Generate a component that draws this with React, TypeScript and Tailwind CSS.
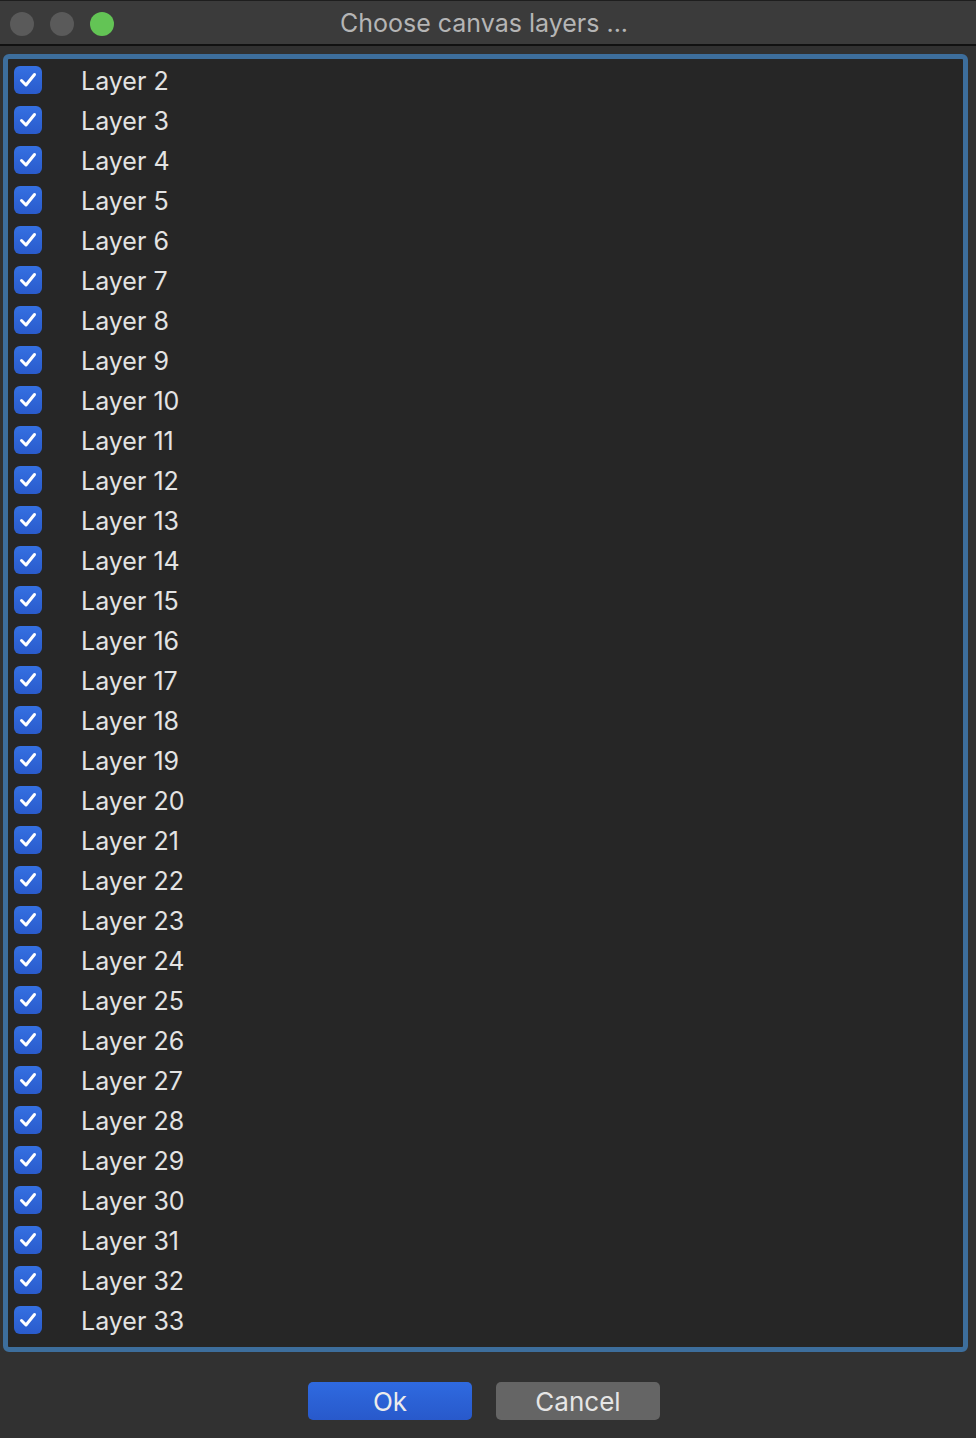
import React from 'react'

const LAYERS = Array.from({ length: 32 }, (_, i) => `Layer ${i + 2}`)

function CheckIcon() {
  return (
    <svg width="20" height="20" viewBox="0 0 20 20" fill="none" stroke="white" strokeWidth="3" strokeLinecap="round" strokeLinejoin="round">
      <path d="M3.5 10.5 L8 15 L16.5 4.5" />
    </svg>
  )
}

export default function App() {
  return (
    <div
      className="w-[976px] h-[1438px] flex flex-col bg-[#313131] overflow-hidden"
      style={{ fontFamily: 'Inter, "Liberation Sans", sans-serif' }}
    >
      {/* Title bar */}
      <div className="relative h-[46px] flex items-center justify-center pr-2 bg-[#3b3b3b] border-t border-t-[#1e1e1e] border-b-2 border-b-[#111]">
        <div className="absolute left-[10px] top-[11px] flex gap-4">
          <span className="w-6 h-6 rounded-full bg-[#5a5a5a]" />
          <span className="w-6 h-6 rounded-full bg-[#5a5a5a]" />
          <span className="w-6 h-6 rounded-full bg-[#63c455]" />
        </div>
        <span className="pt-[2px] text-[25px] text-[#b5b5b5] leading-none">Choose canvas layers ...</span>
      </div>

      {/* Layer list */}
      <div className="mt-[8px] ml-[3px] mr-[8px] h-[1298px] rounded-[6px] border-[5px] border-[#3d6e9c] bg-[#262626] pt-[1px]">
        {LAYERS.map((label) => (
          <div key={label} className="h-10 flex items-center pl-[6px]">
            <span className="w-[28px] h-[28px] rounded-[6px] bg-gradient-to-b from-[#3570e2] to-[#2a5bcc] flex items-center justify-center">
              <CheckIcon />
            </span>
            <span className="ml-[39px] pt-[2px] text-[25px] text-[#e3e3e3] leading-none">{label}</span>
          </div>
        ))}
      </div>

      {/* Buttons */}
      <div className="flex justify-center gap-6 mt-[30px] pr-2">
        <button className="w-[164px] h-[38px] pt-[2px] rounded-[5px] bg-gradient-to-b from-[#2f6ae0] to-[#2859cb] text-[26px] text-[#ececec] leading-none">
          Ok
        </button>
        <button className="w-[164px] h-[38px] pt-[2px] rounded-[5px] bg-[#656565] text-[26px] text-[#e6e6e6] leading-none">
          Cancel
        </button>
      </div>
    </div>
  )
}
